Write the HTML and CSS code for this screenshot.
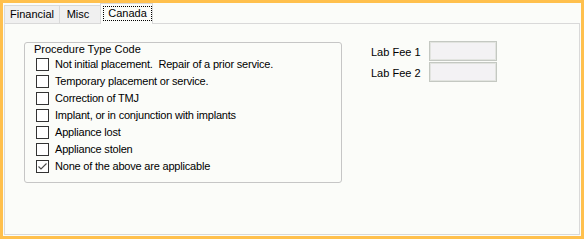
FILE: index.html
```html
<!DOCTYPE html>
<html lang="en">

<head>
    <meta charset="UTF-8">
    <meta name="viewport" content="width=device-width, initial-scale=1.0">
    <title>Claim - Canada</title>
    <link rel="stylesheet" href="styles.css">
</head>

<body>
    <div class="frame">
        <!-- tabs -->
        <div class="tabs">
            <div class="tab tab-financial">Financial</div>
            <div class="tab tab-misc">Misc</div>
            <div class="tab tab-canada active"><span class="focus">Canada</span></div>
        </div>

        <div class="panel">
            <!-- procedure type code group -->
            <div class="group">
                <div class="group-title">Procedure Type Code</div>
                <div class="check-row"><span class="box"></span><span class="label">Not initial placement.&nbsp; Repair of a prior service.</span></div>
                <div class="check-row"><span class="box"></span><span class="label">Temporary placement or service.</span></div>
                <div class="check-row"><span class="box"></span><span class="label">Correction of TMJ</span></div>
                <div class="check-row"><span class="box"></span><span class="label">Implant, or in conjunction with implants</span></div>
                <div class="check-row"><span class="box"></span><span class="label">Appliance lost</span></div>
                <div class="check-row"><span class="box"></span><span class="label">Appliance stolen</span></div>
                <div class="check-row">
                    <span class="box checked">
                        <svg width="11" height="11" viewBox="0 0 11 11">
                            <path d="M1.5 5.5 L4 8 L9.5 2.5" fill="none" stroke="#4a4a4a" stroke-width="1.1"/>
                        </svg>
                    </span>
                    <span class="label">None of the above are applicable</span>
                </div>
            </div>

            <!-- lab fees -->
            <div class="fees">
                <div class="fee-row">
                    <span class="fee-label">Lab Fee 1</span>
                    <div class="fee-box"></div>
                </div>
                <div class="fee-row">
                    <span class="fee-label">Lab Fee 2</span>
                    <div class="fee-box"></div>
                </div>
            </div>
        </div>
    </div>
</body>

</html>
```

FILE: styles.css
```css
* {
    box-sizing: border-box;
}

body {
    margin: 0;
    font-family: "Liberation Sans", Arial, sans-serif;
    font-size: 11px;
    color: #000;
}

.frame {
    width: 584px;
    height: 239px;
    border: 3px solid #ffc04d;
    background-color: #fbfcf9;
    display: flex;
    flex-direction: column;
}

/* tabs */
.tabs {
    height: 20px;
    margin-left: 1px;
    display: flex;
    align-items: flex-end;
}

.tab {
    height: 18px;
    line-height: 17px;
    text-align: center;
    background-color: #f0f0f0;
    border: 1px solid #d9d9d9;
    border-bottom: none;
}

.tab-financial {
    width: 56px;
}

.tab-misc {
    width: 42px;
    margin-left: -1px;
    padding-right: 4px;
}

.tab-canada {
    width: 53px;
    margin-left: -1px;
}

.tab.active {
    height: 21px;
    margin-bottom: -1px;
    padding: 2px 1px 0 2px;
    background-color: #fbfcf9;
    position: relative;
    z-index: 1;
    text-align: left;
}

.focus {
    display: block;
    width: 49px;
    height: 15px;
    line-height: 13px;
    text-align: center;
    border: 1px dotted #000;
}

/* panel */
.panel {
    flex: 1;
    margin: 0 1px 1px 1px;
    border: 1px solid #d9d9d9;
    padding: 18px 0 0 19px;
    display: flex;
    align-items: flex-start;
}

.group {
    width: 318px;
    height: 141px;
    border: 1px solid #c6c6c6;
    border-radius: 3px;
    padding-left: 9px;
}

.group-title {
    line-height: 12px;
    margin-bottom: 1px;
}

.check-row {
    height: 17px;
    line-height: 17px;
    padding-left: 2px;
    display: flex;
    align-items: center;
}

.box {
    width: 13px;
    height: 13px;
    border: 1px solid #333;
    background-color: #fff;
    margin-right: 6px;
    flex-shrink: 0;
    display: flex;
}

.label {
    white-space: nowrap;
    letter-spacing: -0.2px;
}

/* lab fees */
.fees {
    margin: -1px 0 0 29px;
    display: flex;
    flex-direction: column;
    gap: 1px;
}

.fee-row {
    display: flex;
    align-items: center;
}

.fee-label {
    width: 58px;
    padding-top: 2px;
}

.fee-box {
    width: 68px;
    height: 20px;
    background-color: #f3f2f4;
    border: 1px solid #c4c8c2;
    box-shadow: inset 0 0 0 1px #e2e4e0;
}
```
